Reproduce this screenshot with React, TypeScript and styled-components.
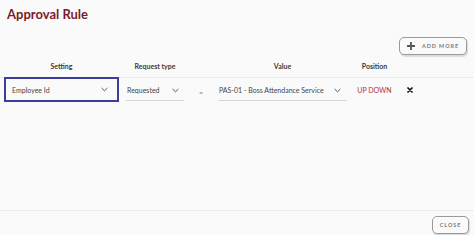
import React from 'react';
import styled, { createGlobalStyle } from 'styled-components';

const GlobalStyle = createGlobalStyle`
  html, body {
    margin: 0;
    padding: 0;
    background: #fafafa;
    font-family: Lato, "Open Sans", "Liberation Sans", sans-serif;
  }
`;

const StyledDialog = styled.div`
  display: flex;
  flex-direction: column;
  width: 474px;
  height: 235px;
  background: #fafafa;
`;

const StyledContent = styled.div`
  flex: 1;
`;

const StyledTitle = styled.div`
  padding: 5px 7px 0;
  font-size: 13px;
  line-height: 19px;
  font-weight: 700;
  color: #7a1a2c;
`;

const StyledToolbar = styled.div`
  display: flex;
  justify-content: flex-end;
  padding: 13px 7px 0 0;
`;

const StyledOutlineButton = styled.button<{ $width: number }>`
  display: flex;
  align-items: center;
  justify-content: center;
  gap: 7px;
  box-sizing: border-box;
  width: ${(p) => p.$width}px;
  height: 18px;
  padding: 0;
  border: 1.5px solid #9a9a9a;
  border-radius: 5px;
  background: #fafafa;
  font-family: Lato, "Liberation Sans", sans-serif;
  font-size: 5.5px;
  font-weight: 700;
  letter-spacing: 0.9px;
  color: #7a7a7a;
  box-shadow: 1px 1.5px 1px rgba(0, 0, 0, 0.12);
`;

const StyledHeaderRow = styled.div`
  display: flex;
  align-items: center;
  height: 22px;
  padding-left: 4px;
  border-bottom: 1px solid #ececec;
`;

const StyledRow = styled.div`
  display: flex;
  align-items: center;
  padding-left: 4px;
`;

const StyledCell = styled.div<{ $width: number; $gap?: number }>`
  display: flex;
  align-items: center;
  justify-content: center;
  width: ${(p) => p.$width}px;
  margin-left: ${(p) => p.$gap ?? 0}px;
  flex-shrink: 0;
`;

const StyledHeaderLabel = styled.div`
  font-size: 7px;
  font-weight: 700;
  color: #3a3a3a;
`;

const StyledBoxSelect = styled.div`
  display: flex;
  align-items: center;
  justify-content: space-between;
  box-sizing: border-box;
  width: 100%;
  height: 25px;
  margin-top: -1px;
  padding: 0 9px 0 6px;
  border: 2px solid #3d3d9c;
  font-size: 7px;
  color: #444;
`;

const StyledLineSelect = styled.div<{ $padRight: number }>`
  display: flex;
  align-items: center;
  justify-content: space-between;
  box-sizing: border-box;
  width: 100%;
  height: 21px;
  margin-top: 1px;
  padding: 0 ${(p) => p.$padRight}px 0 1px;
  border-bottom: 1px solid #d6d6d6;
  font-size: 7px;
  color: #444;
  white-space: nowrap;
`;

const StyledEquals = styled.div`
  font-size: 7px;
  color: #888;
  margin-top: 4px;
`;

const StyledPosition = styled.div`
  font-size: 7px;
  color: #b1303f;
  white-space: nowrap;
`;

const StyledFooter = styled.div`
  display: flex;
  justify-content: flex-end;
  height: 25px;
  padding: 5px 5px 0 0;
  box-sizing: border-box;
  border-top: 1px solid #ececec;
`;

const Chevron = () => (
  <svg width="7" height="5" viewBox="0 0 7 5">
    <polyline points="0.6,1 3.5,3.8 6.4,1" fill="none" stroke="#555" strokeWidth="1" />
  </svg>
);

const Plus = () => (
  <svg width="8" height="8" viewBox="0 0 8 8">
    <path d="M4 0v8M0 4h8" stroke="#555" strokeWidth="1.8" />
  </svg>
);

const Cross = () => (
  <svg width="6" height="6" viewBox="0 0 6 6">
    <path d="M1 1l4 4M5 1l-4 4" stroke="#111" strokeWidth="1.7" strokeLinecap="round" />
  </svg>
);

const columns = {
  setting: { width: 115 },
  request: { width: 58, gap: 7 },
  equals: { width: 34 },
  value: { width: 129 },
  position: { width: 45, gap: 5 },
  remove: { width: 26 },
};

export default function App() {
  return (
    <StyledDialog>
      <GlobalStyle />
      <StyledContent>
        <StyledTitle>Approval Rule</StyledTitle>
        <StyledToolbar>
          <StyledOutlineButton $width={68}>
            <Plus />
            <span>ADD MORE</span>
          </StyledOutlineButton>
        </StyledToolbar>
        <StyledHeaderRow>
          <StyledCell $width={columns.setting.width}>
            <StyledHeaderLabel>Setting</StyledHeaderLabel>
          </StyledCell>
          <StyledCell $width={columns.request.width} $gap={columns.request.gap}>
            <StyledHeaderLabel>Request type</StyledHeaderLabel>
          </StyledCell>
          <StyledCell $width={columns.equals.width} />
          <StyledCell $width={columns.value.width}>
            <StyledHeaderLabel>Value</StyledHeaderLabel>
          </StyledCell>
          <StyledCell $width={columns.position.width} $gap={columns.position.gap}>
            <StyledHeaderLabel>Position</StyledHeaderLabel>
          </StyledCell>
        </StyledHeaderRow>
        <StyledRow>
          <StyledCell $width={columns.setting.width}>
            <StyledBoxSelect>
              <span>Employee Id</span>
              <Chevron />
            </StyledBoxSelect>
          </StyledCell>
          <StyledCell $width={columns.request.width} $gap={columns.request.gap}>
            <StyledLineSelect $padRight={5}>
              <span>Requested</span>
              <Chevron />
            </StyledLineSelect>
          </StyledCell>
          <StyledCell $width={columns.equals.width}>
            <StyledEquals>=</StyledEquals>
          </StyledCell>
          <StyledCell $width={columns.value.width}>
            <StyledLineSelect $padRight={6}>
              <span>PAS-01 - Boss Attendance Service</span>
              <Chevron />
            </StyledLineSelect>
          </StyledCell>
          <StyledCell $width={columns.position.width} $gap={columns.position.gap}>
            <StyledPosition>UP DOWN</StyledPosition>
          </StyledCell>
          <StyledCell $width={columns.remove.width}>
            <Cross />
          </StyledCell>
        </StyledRow>
      </StyledContent>
      <StyledFooter>
        <StyledOutlineButton $width={37}>CLOSE</StyledOutlineButton>
      </StyledFooter>
    </StyledDialog>
  );
}
